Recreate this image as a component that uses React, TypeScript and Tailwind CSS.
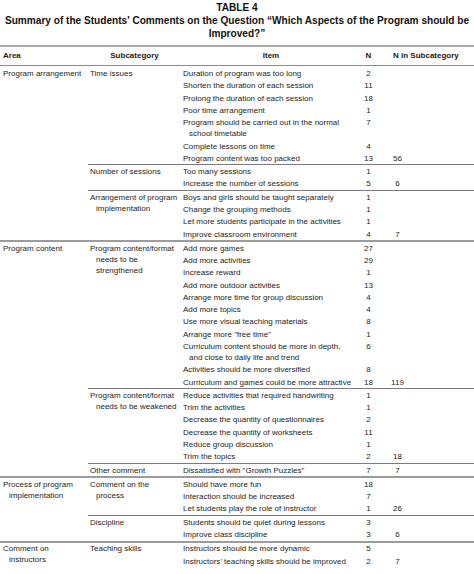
import React from "react";

type Item = [string | string[], string];
type Sub = { sub: string[]; items: Item[]; total: string };
type Area = { area: string[]; subs: Sub[] };

const data: Area[] = [
  {
    area: ["Program arrangement"],
    subs: [
      {
        sub: ["Time issues"],
        items: [
          ["Duration of program was too long", "2"],
          ["Shorten the duration of each session", "11"],
          ["Prolong the duration of each session", "18"],
          ["Poor time arrangement", "1"],
          [["Program should be carried out in the normal", "school timetable"], "7"],
          ["Complete lessons on time", "4"],
          ["Program content was too packed", "13"],
        ],
        total: "56",
      },
      {
        sub: ["Number of sessions"],
        items: [
          ["Too many sessions", "1"],
          ["Increase the number of sessions", "5"],
        ],
        total: "6",
      },
      {
        sub: ["Arrangement of program", "implementation"],
        items: [
          ["Boys and girls should be taught separately", "1"],
          ["Change the grouping methods", "1"],
          ["Let more students participate in the activities", "1"],
          ["Improve classroom environment", "4"],
        ],
        total: "7",
      },
    ],
  },
  {
    area: ["Program content"],
    subs: [
      {
        sub: ["Program content/format", "needs to be", "strengthened"],
        items: [
          ["Add more games", "27"],
          ["Add more activities", "29"],
          ["Increase reward", "1"],
          ["Add more outdoor activities", "13"],
          ["Arrange more time for group discussion", "4"],
          ["Add more topics", "4"],
          ["Use more visual teaching materials", "8"],
          ['Arrange more "free time"', "1"],
          [["Curriculum content should be more in depth,", "and close to daily life and trend"], "6"],
          ["Activities should be more diversified", "8"],
          ["Curriculum and games could be more attractive", "18"],
        ],
        total: "119",
      },
      {
        sub: ["Program content/format", "needs to be weakened"],
        items: [
          ["Reduce activities that required handwriting", "1"],
          ["Trim the activities", "1"],
          ["Decrease the quantity of questionnaires", "2"],
          ["Decrease the quantity of worksheets", "11"],
          ["Reduce group discussion", "1"],
          ["Trim the topics", "2"],
        ],
        total: "18",
      },
      {
        sub: ["Other comment"],
        items: [['Dissatisfied with "Growth Puzzles"', "7"]],
        total: "7",
      },
    ],
  },
  {
    area: ["Process of program", "implementation"],
    subs: [
      {
        sub: ["Comment on the", "process"],
        items: [
          ["Should have more fun", "18"],
          ["Interaction should be increased", "7"],
          ["Let students play the role of instructor", "1"],
        ],
        total: "26",
      },
      {
        sub: ["Discipline"],
        items: [
          ["Students should be quiet during lessons", "3"],
          ["Improve class discipline", "3"],
        ],
        total: "6",
      },
    ],
  },
  {
    area: ["Comment on", "instructors"],
    subs: [
      {
        sub: ["Teaching skills"],
        items: [
          ["Instructors should be more dynamic", "5"],
          ["Instructors\u2019 teaching skills should be improved", "2"],
        ],
        total: "7",
      },
    ],
  },
];

function Lines({ lines }: { lines: string[] }) {
  return (
    <>
      {lines.map((l, i) => (
        <div key={i} className={i > 0 ? "pl-[6px] whitespace-nowrap" : "whitespace-nowrap"}>
          {l}
        </div>
      ))}
    </>
  );
}

export default function App() {
  return (
    <div
      className="w-[474px] h-[574px] overflow-hidden bg-white text-[#252525]"
      style={{ fontFamily: '"Liberation Sans", Arial, sans-serif' }}
    >
      <div className="pt-[0.5px] text-center font-bold text-[10.1px] leading-[13px] text-[#111]">
        <div>TABLE 4</div>
        <div className="whitespace-nowrap">
          Summary of the Students' Comments on the Question {"\u201C"}Which Aspects of the Program should be
        </div>
        <div>Improved?{"\u201D"}</div>
      </div>

      <div className="mt-[5px] border-t-2 border-[#a8a8a8]">
        <div className="flex h-[19px] items-center border-b border-[#8c8c8c] font-bold text-[8px] leading-[19px] text-[#1a1a1a]">
          <div className="w-[88px] pl-[3px]">Area</div>
          <div className="w-[93px] text-center">Subcategory</div>
          <div className="w-[180px] text-center">Item</div>
          <div className="w-[15px] text-center">N</div>
          <div className="ml-[15px] pl-[2px] whitespace-nowrap">N in Subcategory</div>
        </div>

        <div className="pt-[2px] text-[8px] leading-[11px]">
          {data.map((a, ai) => (
            <div
              key={ai}
              className={
                ai < data.length - 1 ? "flex border-b-2 border-[#9c9c9c]" : "flex"
              }
            >
              <div className="w-[88px] shrink-0 pl-[3px] pt-[0.65px]">
                <Lines lines={a.area} />
              </div>
              <div className="flex flex-1 flex-col">
                {a.subs.map((s, si) => (
                  <div
                    key={si}
                    className={
                      si < a.subs.length - 1 ? "flex border-b border-[#7c7c7c]" : "flex"
                    }
                  >
                    <div className="w-[93px] shrink-0 pl-[2px] pt-[0.65px]">
                      <Lines lines={s.sub} />
                    </div>
                    <div className="flex flex-1 flex-col">
                      {s.items.map(([t, n], ii) => (
                        <div key={ii} className="flex py-[0.65px]">
                          <div className="w-[180px] shrink-0 pl-[2px]">
                            <Lines lines={Array.isArray(t) ? t : [t]} />
                          </div>
                          <div className="w-[15px] shrink-0 text-center">{n}</div>
                          <div className="ml-[15px] w-[13px] shrink-0 text-center">
                            {ii === s.items.length - 1 ? s.total : ""}
                          </div>
                        </div>
                      ))}
                    </div>
                  </div>
                ))}
              </div>
            </div>
          ))}
        </div>
      </div>
    </div>
  );
}
